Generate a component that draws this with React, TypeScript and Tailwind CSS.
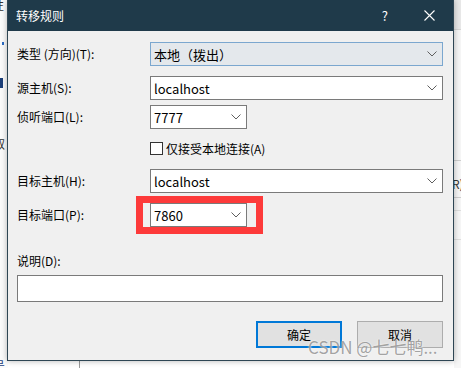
import React from 'react';

const Chevron: React.FC = () => (
  <svg width="10" height="6" viewBox="0 0 10 6" className="mr-[5px] shrink-0">
    <polyline points="0.5,0.5 5,5 9.5,0.5" fill="none" stroke="#5f5f5f" strokeWidth="1" />
  </svg>
);

const Combo: React.FC<{ value: string; wide?: boolean; active?: boolean }> = ({ value, wide, active }) => (
  <div
    className={`flex items-center h-[24px] border ${wide ? 'w-[293px]' : 'w-[97px]'} ${
      active ? 'border-[#7ba7cf] bg-[#e4e8ec]' : 'border-[#7a7a7a] bg-white'
    }`}
  >
    <span className="flex-1 pl-[3px] text-[13px] text-black leading-none">{value}</span>
    <Chevron />
  </div>
);

const Row: React.FC<{ label: string; children: React.ReactNode; mt: string }> = ({ label, children, mt }) => (
  <div className={`flex items-center ${mt}`}>
    <span className="w-[133px] text-[12px] text-black">{label}</span>
    {children}
  </div>
);

const App: React.FC = () => {
  return (
    <div className="relative w-[461px] h-[368px] overflow-hidden bg-white font-['Noto_Sans_CJK_SC','Noto_Sans',sans-serif]">
      {/* window behind the dialog */}
      <div className="absolute left-0 top-0 w-[8px] h-[368px] bg-[#fbfbfb]">
        <span className="absolute left-[-8px] top-[-4px] text-[12px] text-[#333]">性</span>
        <span className="absolute left-[2px] top-[42px] w-[2px] h-[3px] bg-[#2b6cc4]" />
        <span className="absolute left-[0px] top-[78px] w-[3px] h-[10px] bg-[#1c3f7a]" />
        <span className="absolute left-[-7px] top-[135px] text-[12px] text-[#333]">取</span>
        <span className="absolute left-[-7px] top-[357px] text-[12px] text-[#1c3f7a]">号</span>
      </div>
      <div className="absolute left-[454px] top-0 w-[7px] h-[368px] bg-[#f6f6f6]">
        <div className="h-[30px] bg-[#e8e8e8] border-b border-[#d6d6d6]" />
        <div className="absolute top-[160px] w-full h-px bg-[#cfcfcf]" />
        <span className="absolute left-[-2px] top-[175px] text-[12px] text-[#333]">R)</span>
        <div className="absolute top-[197px] w-full h-px bg-[#cfcfcf]" />
        <div className="absolute top-[210px] w-full h-px bg-[#dedede]" />
        <div className="absolute top-[239px] w-full h-px bg-[#dedede]" />
      </div>
      <div className="absolute left-[79px] top-[360px] w-px h-[8px] bg-[#9a9a9a]" />

      {/* dialog */}
      <div className="absolute left-[7px] top-0 w-[447px] h-[361px] flex flex-col bg-[#f0f0f0] border-x border-b border-[#2e4654] shadow-[0_0_6px_rgba(0,0,0,0.3)]">
        <div className="flex items-center h-[31px] bg-[#1f3a4a] text-white shrink-0">
          <span className="pl-[8px] text-[12px] flex-1">转移规则</span>
          <span className="text-[13px] mr-[36px]">?</span>
          <svg width="11" height="11" viewBox="0 0 11 11" className="mr-[18px]">
            <path d="M0.5 0.5 L10.5 10.5 M10.5 0.5 L0.5 10.5" stroke="#fff" strokeWidth="1.1" />
          </svg>
        </div>

        <div className="flex flex-col pl-[9px] pr-[10px]">
          <Row label="类型 (方向)(T):" mt="mt-[11px]">
            <Combo value="本地（拨出）" wide active />
          </Row>
          <Row label="源主机(S):" mt="mt-[10px]">
            <Combo value="localhost" wide />
          </Row>
          <Row label="侦听端口(L):" mt="mt-[5px]">
            <Combo value="7777" />
          </Row>

          <div className="flex items-center mt-[13px] h-[13px] pl-[133px]">
            <span className="w-[13px] h-[13px] border border-[#333] bg-white shrink-0" />
            <span className="ml-[3px] text-[12px] text-black">仅接受本地连接(A)</span>
          </div>

          <Row label="目标主机(H):" mt="mt-[14px]">
            <Combo value="localhost" wide />
          </Row>
          <Row label="目标端口(P):" mt="mt-[10px]">
            <div className="relative">
              <Combo value="7860" />
              <div className="absolute left-[-14px] top-[-7px] w-[127px] h-[38px] border-[7px] border-[#fd3a3a]" />
            </div>
          </Row>

          <span className="mt-[26px] text-[12px] text-black leading-[16px]">说明(D):</span>
          <div className="mt-[6px] h-[27px] border border-[#7a7a7a] bg-white" />

          <div className="flex justify-end gap-[15px] mt-[19px]">
            <button className="w-[86px] h-[27px] border-2 border-[#0078d7] bg-[#e1e1e1] text-[12px] text-black">
              确定
            </button>
            <button className="w-[86px] h-[27px] border border-[#adadad] bg-[#e1e1e1] text-[12px] text-black">
              取消
            </button>
          </div>
        </div>
      </div>

      {/* watermark */}
      <span className="absolute left-[308px] top-[334px] text-[17px] text-[#8c8c8c]/80 [text-shadow:0_0_2px_#fff] whitespace-nowrap">
        CSDN @七七鸭...
      </span>
    </div>
  );
};

export default App;
